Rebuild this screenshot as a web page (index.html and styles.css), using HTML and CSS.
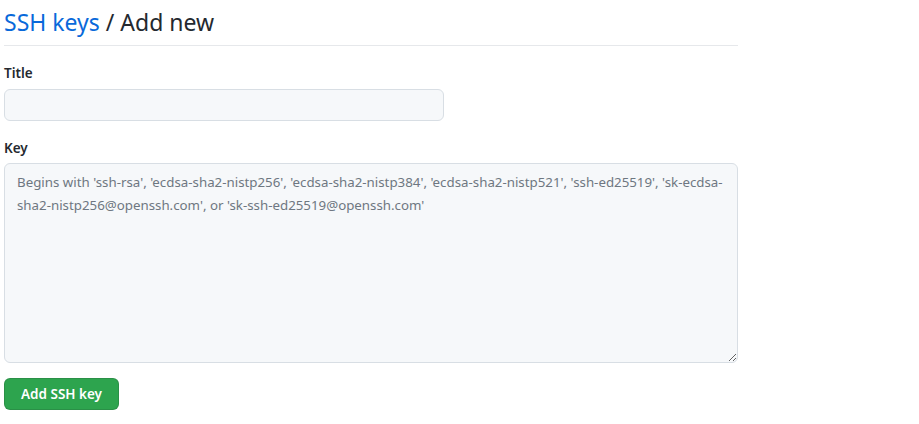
FILE: index.html
```html
<!DOCTYPE html>
<html>
<head>
<meta charset="utf-8">
<link rel="stylesheet" href="styles.css">
</head>
<body>
<div class="page">
  <div class="subhead">
    <h2 class="subhead-heading"><a class="crumb" href="#">SSH keys</a> / Add new</h2>
  </div>
  <form class="form">
    <div class="form-group form-group-title">
      <label class="label" for="title">Title</label>
      <input class="input input-title" id="title" type="text">
    </div>
    <div class="form-group">
      <label class="label label-key" for="key">Key</label>
      <textarea class="input input-key" id="key" placeholder="Begins with 'ssh-rsa', 'ecdsa-sha2-nistp256', 'ecdsa-sha2-nistp384', 'ecdsa-sha2-nistp521', 'ssh-ed25519', 'sk-ecdsa-sha2-nistp256@openssh.com', or 'sk-ssh-ed25519@openssh.com'"></textarea>
    </div>
    <button class="btn-primary" type="button">Add SSH key</button>
  </form>
</div>
</body>
</html>
```

FILE: styles.css
```css
* { box-sizing: border-box; }
body {
  margin: 0;
  background: #ffffff;
  color: #24292f;
  font-family: "Noto Sans", "Open Sans", sans-serif;
  font-size: 14px;
  line-height: 1.5;
}
.page {
  width: 734px;
  margin-left: 4px;
}
.subhead {
  padding-bottom: 5px;
  border-bottom: 1px solid #e6e8eb;
  display: flex;
  align-items: flex-end;
  height: 46px;
}
.subhead-heading {
  margin: 0;
  font-size: 23px;
  font-weight: 400;
  line-height: 36px;
  color: #24292f;
}
.crumb {
  color: #0969da;
  text-decoration: none;
}
.form {
  padding-top: 17px;
}
.form-group {
  display: flex;
  flex-direction: column;
  margin-bottom: 15px;
}
.form-group-title {
  margin-bottom: 17px;
}
.label {
  font-weight: 600;
  font-size: 13.5px;
  line-height: 21px;
  margin-bottom: 5px;
}
.label-key {
  margin-bottom: 4px;
}
.input {
  font-family: inherit;
  font-size: 13.5px;
  line-height: 20px;
  color: #24292f;
  background: #f6f8fa;
  border: 1px solid #d8dee4;
  border-radius: 6px;
  padding: 5px 12px;
  outline: none;
}
.input-title {
  width: 440px;
  height: 32px;
}
.input-key {
  width: 734px;
  height: 200px;
  padding: 7px 8px 7px 12px;
  font-size: 13.3px;
  line-height: 23px;
  resize: vertical;
}
.input-key::placeholder {
  color: #6e7781;
}
.btn-primary {
  font-family: inherit;
  font-size: 13.5px;
  font-weight: 600;
  color: #ffffff;
  background: #2da44e;
  border: 1px solid rgba(27,31,36,0.15);
  border-radius: 6px;
  height: 32px;
  width: 115px;
  padding: 0;
  cursor: pointer;
}
```
